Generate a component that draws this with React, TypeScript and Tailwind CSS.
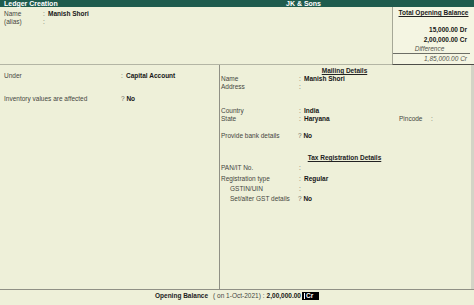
const font = "font-['Liberation_Sans',Arial,sans-serif]"

function Row({ label, sep = ':', value, labelW, indent = 0 }: { label: string; sep?: string; value?: string; labelW: string; indent?: number }) {
  return (
    <div className="flex h-[8px] items-center leading-[8px]">
      <span className={`${labelW} shrink-0 text-[#45463f]`} style={indent ? { paddingLeft: indent } : undefined}>
        {label}
      </span>
      <span className="w-[5px] shrink-0 text-[#6b6c63]">{sep}</span>
      {value && <span className="font-bold text-[#161616]">{value}</span>}
    </div>
  )
}

export default function App() {
  return (
    <div className={`${font} flex h-[305px] w-[474px] flex-col overflow-hidden bg-[#eef0d9] text-[6.5px]`}>
      {/* title bar */}
      <div className="flex h-[7px] shrink-0 items-center bg-[#1f5c4e] text-[7px] font-bold leading-[7px] text-white">
        <span className="w-[286px] pl-[4px]">Ledger Creation</span>
        <span>JK &amp; Sons</span>
      </div>

      {/* top area */}
      <div className="flex h-[58px] shrink-0">
        <div className="flex-1 border-b border-[#b3b5a4] pt-[3px] pl-[4px]">
          <Row label="Name" labelW="w-[39px]" value="Manish Shori" />
          <Row label="(alias)" labelW="w-[39px]" />
        </div>
        <div className="w-[82px] border-b border-l border-b-[#4d4d48] border-l-[#a6a897] bg-[#f4f5e2] pt-[1px]">
          <div className="h-[9px] text-center font-bold leading-[9px] text-[#222] underline underline-offset-[1px]">
            Total Opening Balance
          </div>
          <div className="h-[8px]" />
          <div className="h-[10px] pr-[7px] text-right font-bold leading-[10px] text-[#161616]">15,000.00 Dr</div>
          <div className="h-[10px] pr-[7px] text-right font-bold leading-[10px] text-[#161616]">2,00,000.00 Cr</div>
          <div className="mr-[4px] h-[9px] border-b border-[#6d6e66] pr-[4px] text-center italic leading-[8px] text-[#55564f]">
            Difference
          </div>
          <div className="h-[9px] pr-[7px] text-right italic leading-[10px] text-[#55564f]">1,85,000.00 Cr</div>
        </div>
      </div>

      {/* middle */}
      <div className="flex flex-1">
        <div className="w-[220px] shrink-0 border-r border-[#8f9085] pt-[7px] pl-[4px]">
          <Row label="Under" labelW="w-[117px]" sep=":" value="Capital Account" />
          <div className="h-[15px]" />
          <div className="flex h-[8px] items-center leading-[8px]">
            <span className="w-[117px] shrink-0 text-[#45463f]">Inventory values are affected</span>
            <span className="text-[#6b6c63]">?&nbsp;</span>
            <span className="font-bold text-[#161616]">No</span>
          </div>
        </div>
        <div className="flex-1 pt-[2px] pl-[1px]">
          <div className="h-[8px] pr-[3px] text-center font-bold leading-[8px] text-[#222] underline underline-offset-[1px]">
            Mailing Details
          </div>
          <Row label="Name" labelW="w-[78px]" value="Manish Shori" />
          <Row label="Address" labelW="w-[78px]" />
          <div className="h-[16px]" />
          <Row label="Country" labelW="w-[78px]" value="India" />
          <div className="flex h-[8px] items-center leading-[8px]">
            <span className="w-[78px] shrink-0 text-[#45463f]">State</span>
            <span className="w-[5px] shrink-0 text-[#6b6c63]">:</span>
            <span className="w-[95px] shrink-0 font-bold text-[#161616]">Haryana</span>
            <span className="w-[32px] shrink-0 text-[#45463f]">Pincode</span>
            <span className="text-[#6b6c63]">:</span>
          </div>
          <div className="h-[9px]" />
          <div className="flex h-[8px] items-center leading-[8px]">
            <span className="w-[77px] shrink-0 text-[#45463f]">Provide bank details</span>
            <span className="text-[#6b6c63]">?&nbsp;</span>
            <span className="font-bold text-[#161616]">No</span>
          </div>
          <div className="h-[14px]" />
          <div className="h-[8px] pr-[3px] text-center font-bold leading-[8px] text-[#222] underline underline-offset-[1px]">
            Tax Registration Details
          </div>
          <div className="h-[2px]" />
          <Row label="PAN/IT No." labelW="w-[78px]" />
          <div className="h-[3px]" />
          <Row label="Registration type" labelW="w-[78px]" value="Regular" />
          <div className="h-[2px]" />
          <Row label="GSTIN/UIN" labelW="w-[78px]" indent={9} />
          <div className="h-[2px]" />
          <div className="flex h-[8px] items-center leading-[8px]">
            <span className="w-[77px] shrink-0 pl-[9px] text-[#45463f]">Set/alter GST details</span>
            <span className="text-[#6b6c63]">?&nbsp;</span>
            <span className="font-bold text-[#161616]">No</span>
          </div>
        </div>
        <div className="w-[3px] shrink-0 bg-[#d3d4c6]" />
      </div>

      {/* footer */}
      <div className="flex h-[16px] shrink-0 items-start border-t border-[#8f9085] pt-[2px] pl-[155px] leading-[8px]">
        <span className="font-bold text-[#222]">Opening Balance</span>
        <span className="ml-[5px] text-[#45463f]">( on 1-Oct-2021)</span>
        <span className="ml-[2px] text-[#45463f]">:</span>
        <span className="ml-[2px] font-bold text-[#161616]">2,00,000.00</span>
        <span className="ml-[1px] flex items-center bg-black px-[2px] font-bold text-white">
          <span className="mr-[1px] h-[6px] w-[1px] bg-white" />
          Cr&nbsp;&nbsp;
        </span>
      </div>
    </div>
  )
}
